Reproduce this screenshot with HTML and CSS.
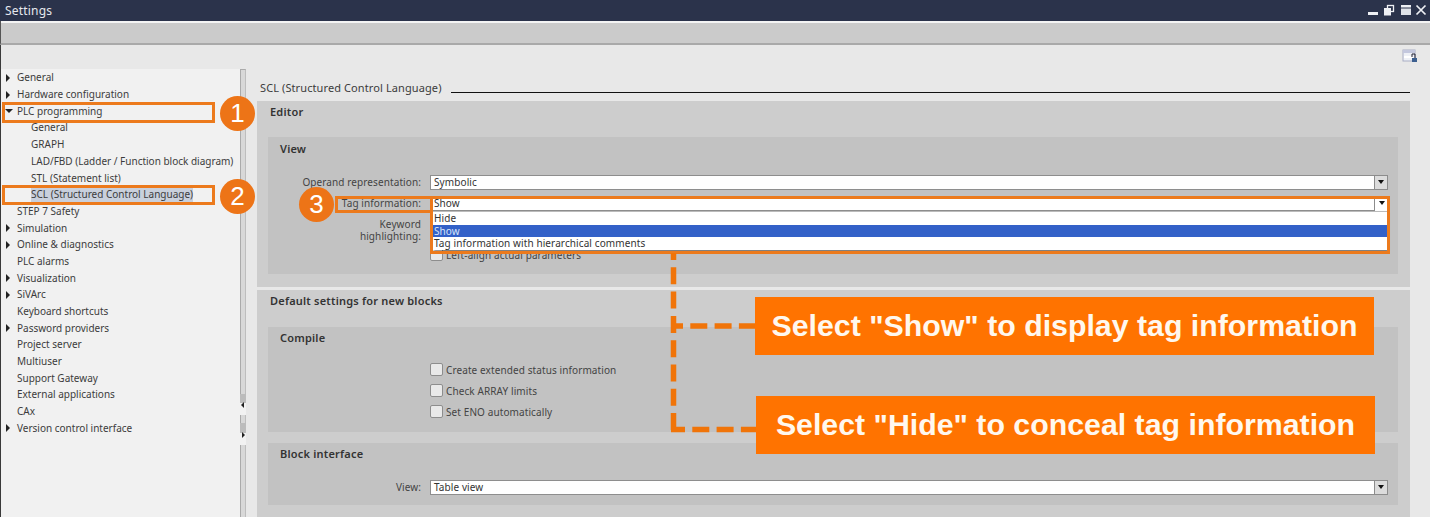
FILE: index.html
```html
<!DOCTYPE html>
<html lang="en">
<head>
<meta charset="utf-8">
<title>Settings</title>
<link rel="stylesheet" href="styles.css">
</head>
<body>
<div class="app">
  <header class="titlebar">
    <span class="title">Settings</span>
    <div class="winbtns">
      <svg width="60" height="14" viewBox="0 0 60 14">
        <rect x="1" y="8" width="10" height="3" fill="#eef0f4"/>
        <rect x="20.500" y="1.500" width="6" height="6" fill="none" stroke="#eef0f4" stroke-width="1.300"/>
        <rect x="17" y="4" width="7" height="7.500" fill="#eef0f4"/>
        <rect x="34" y="1" width="10" height="2.500" fill="#eef0f4"/>
        <rect x="34" y="4.500" width="10" height="6.500" fill="#dfe2e8"/>
        <path d="M49.500 1.500 L58.500 10.500 M58.500 1.500 L49.500 10.500" stroke="#eef0f4" stroke-width="1.700" fill="none"/>
      </svg>
    </div>
  </header>
  <div class="toolbar"></div>
  <div class="body">
    <nav class="side">
      <div class="tree">
        <div class="row"><i class="arr"></i>General</div>
        <div class="row"><i class="arr"></i>Hardware configuration</div>
        <div class="row"><i class="arr open"></i>PLC programming</div>
        <div class="row sub">General</div>
        <div class="row sub">GRAPH</div>
        <div class="row sub">LAD/FBD (Ladder / Function block diagram)</div>
        <div class="row sub">STL (Statement list)</div>
        <div class="row sub"><span class="sel">SCL (Structured Control Language)</span></div>
        <div class="row">STEP 7 Safety</div>
        <div class="row"><i class="arr"></i>Simulation</div>
        <div class="row"><i class="arr"></i>Online &amp; diagnostics</div>
        <div class="row">PLC alarms</div>
        <div class="row"><i class="arr"></i>Visualization</div>
        <div class="row"><i class="arr"></i>SiVArc</div>
        <div class="row">Keyboard shortcuts</div>
        <div class="row"><i class="arr"></i>Password providers</div>
        <div class="row">Project server</div>
        <div class="row">Multiuser</div>
        <div class="row">Support Gateway</div>
        <div class="row">External applications</div>
        <div class="row">CAx</div>
        <div class="row"><i class="arr"></i>Version control interface</div>
      </div>
    </nav>
    <div class="splitter">
      <div class="thumb"></div>
      <div class="split-btns">
        <div class="split-btn"><i class="tri-l"></i></div>
        <div class="split-btn second"><i class="tri-r"></i></div>
      </div>
    </div>
    <main class="main">
      <div class="top-icon">
        <svg width="16" height="14" viewBox="0 0 16 14">
          <rect x="1" y="1" width="12" height="11" fill="#eef0f6" stroke="#a9aec4"/>
          <rect x="1" y="1" width="12" height="3" fill="#c4c8de"/>
          <rect x="2" y="7" width="9" height="2" fill="#fff"/>
          <rect x="10" y="9" width="5" height="4" fill="#3c5f8f"/>
          <path d="M10 8V5h3v4" fill="none" stroke="#223" stroke-width="1"/>
        </svg>
      </div>
      <div class="heading"><span>SCL (Structured Control Language)</span><div class="rule"></div></div>
      <section class="panel editor">
        <h2>Editor</h2>
        <div class="group view">
          <h3>View</h3>
          <div class="field first"><label>Operand representation:</label><div class="combo"><span>Symbolic</span><b class="btn"><i></i></b></div></div>
          <div class="field tag"><label>Tag information:</label><div class="combo flat"><span>Show</span><b class="btn"><i></i></b></div></div>
          <div class="field kw"><label>Keyword<br>highlighting:</label></div>
          <div class="check align"><i class="box"></i>Left-align actual parameters</div>
        </div>
      </section>
      <section class="panel defaults">
        <h2>Default settings for new blocks</h2>
        <div class="group compile">
          <h3>Compile</h3>
          <div class="checks">
            <div class="check"><i class="box"></i>Create extended status information</div>
            <div class="check"><i class="box"></i>Check ARRAY limits</div>
            <div class="check"><i class="box"></i>Set ENO automatically</div>
          </div>
        </div>
        <div class="group block">
          <h3>Block interface</h3>
          <div class="field"><label>View:</label><div class="combo"><span>Table view</span><b class="btn"><i></i></b></div></div>
        </div>
      </section>
    </main>
  </div>

  <div class="popup">
    <div>Hide</div>
    <div class="hl">Show</div>
    <div>Tag information with hierarchical comments</div>
  </div>

  <div class="mark m1"></div>
  <div class="mark m2"></div>
  <div class="mark m3a"></div>
  <div class="mark m3b"></div>
  <div class="num n1">1</div>
  <div class="num n2">2</div>
  <div class="num n3">3</div>

  <svg class="connector" width="90" height="190" viewBox="0 0 90 190">
    <path class="dash v" d="M3.500 2V179"/>
    <path class="dash h1" d="M1 75H86"/>
    <path class="dash h2" d="M1 178.500H86"/>
  </svg>
  <div class="callout c1">Select "Show" to display tag information</div>
  <div class="callout c2">Select "Hide" to conceal tag information</div>
</div>
</body>
</html>
```
FILE: styles.css
```css
* { box-sizing: border-box; }
html, body { margin: 0; padding: 0; }
body { width: 1430px; height: 517px; overflow: hidden; font-family: "Noto Sans", "Open Sans", sans-serif; font-size: 10px; color: #333; background: #e8e8e8; }
.app { position: relative; width: 1430px; height: 517px; overflow: hidden; display: flex; flex-direction: column; }
.titlebar { height: 21px; flex: none; background: #2b334b; color: #e6e8ee; display: flex; align-items: center; justify-content: space-between; padding: 0 3px 0 5px; }
.title { font-size: 12px; letter-spacing: .2px; }
.winbtns { display: flex; align-items: center; height: 14px; }
.toolbar { height: 24px; flex: none; background: #cbcbcb; border-bottom: 2px solid #a9a9a9; border-left: 1px solid #555; box-shadow: inset 0 2px 0 #f4f4f4; }
.body { flex: 1; display: flex; min-height: 0; border-left: 1px solid #3a3a3a; }
.side { width: 239px; flex: none; margin-top: 24px; background: #f1f1f1; }
.tree { font-size: 10px; color: #3c3c3c; padding-top: .4px; }
.row { height: 16.7px; line-height: 16.7px; padding-left: 16px; position: relative; white-space: nowrap; }
.row.sub { padding-left: 30px; }
.sel { background: #c9d0dc; padding: 1px 0; }
.arr { position: absolute; left: 5px; top: 4.500px; width: 0; height: 0; border-left: 4px solid #222; border-top: 4px solid transparent; border-bottom: 4px solid transparent; }
.arr.open { left: 4px; top: 6.500px; border-left: 4px solid transparent; border-right: 4px solid transparent; border-top: 4px solid #222; border-bottom: 0; }
.splitter { width: 17px; flex: none; background: #e8e8e8; position: relative; }
.thumb { position: absolute; left: 0; top: 24px; bottom: 0; width: 6px; background: #d8d8d8; border-left: 1px solid #aaa; border-right: 1px solid #bdbdbd; border-top: 1px solid #aaa; }
.split-btns { position: absolute; left: 0; top: 349px; width: 6px; }
.split-btn { height: 21px; background: linear-gradient(#bcbcbc 45%, #f2f2f2 45%); position: relative; }
.split-btn.second { margin-top: 8px; height: 22px; }
.tri-l, .tri-r { position: absolute; top: 8px; left: 1px; width: 0; height: 0; border-top: 3px solid transparent; border-bottom: 3px solid transparent; }
.tri-l { border-right: 3px solid #222; }
.tri-r { border-left: 3px solid #222; left: 2px; top: 9px; }
.main { flex: 1; min-width: 0; padding-right: 20px; display: flex; flex-direction: column; background: #e8e8e8; }
.top-icon { height: 0; align-self: flex-end; margin: 4px -8px 0 0; }
.heading { display: flex; align-items: flex-end; gap: 9px; margin: 27px 0 0 3px; height: 20px; font-size: 11px; letter-spacing: .1px; color: #3c3c3c; }
.heading span { line-height: 16px; }
.rule { flex: 1; height: 1px; background: #111; margin: 0 0 3px 0; }
.panel { background: #cdcdcd; padding: 0 12px 0 11px; }
.editor { height: 186px; margin-top: 5px; flex: none; }
.defaults { height: 227px; margin-top: 3px; flex: none; }
h2 { margin: 0; font-size: 11px; font-weight: 600; letter-spacing: .2px; color: #333; height: 36px; padding: 4px 2px 0; line-height: 14px; }
.defaults h2 { height: 37px; padding-top: 4px; }
h3 { margin: 0; font-size: 11px; font-weight: 600; letter-spacing: .2px; color: #333; line-height: 14px; }
.group { background: #c2c2c2; padding: 5px 12px; }
.view { height: 137px; position: relative; }
.compile { height: 105px; padding-top: 4px; }
.block { height: 62px; margin-top: 11px; padding-top: 4px; }
.field { display: flex; align-items: center; height: 16px; }
.field label { width: 150px; flex: none; text-align: right; padding-right: 9px; line-height: 12px; letter-spacing: .1px; color: #444; }
.first { margin-top: 18px; }
.tag { margin-top: 5px; }
.kw { margin-top: 7px; height: 24px; }
.block .field { margin-top: 18px; }
.combo { width: 958px; height: 15px; background: #fff; border: 1px solid #8e8e8e; border-right: 0; display: flex; align-items: center; justify-content: space-between; padding-left: 3px; letter-spacing: .1px; color: #333; flex: none; }
.btn { width: 14px; height: 15px; flex: none; background: #dcdcdc; border: 1px solid #8c8c8c; display: flex; align-items: center; justify-content: center; }
.btn i { width: 0; height: 0; border-left: 3.500px solid transparent; border-right: 3.500px solid transparent; border-top: 4px solid #111; }
.flat .btn { background: #fff; border-width: 0 0 0 1px; }
.check { display: flex; align-items: center; height: 21px; letter-spacing: .1px; color: #444; }
.box { width: 13px; height: 13px; background: #e9e9e9; border: 1px solid #8d8d8d; border-radius: 2px; margin-right: 3px; flex: none; }
.align { position: absolute; left: 162px; top: 107px; }
.checks { margin: 14px 0 0 150px; }
.popup { position: absolute; left: 433px; top: 212px; width: 954px; height: 38px; background: #fff; color: #333; letter-spacing: .1px; font-size: 10px; box-shadow: 1px 1px 2px rgba(0,0,0,.5); }
.popup div { height: 12.500px; line-height: 12.500px; padding-left: 1px; }
.popup .hl { background: #3361c8; color: #d8e4f8; }
.mark { position: absolute; border: 3px solid #ec7a1c; }
.m1 { left: 2px; top: 102px; width: 213px; height: 21px; }
.m2 { left: 2px; top: 185px; width: 213px; height: 20px; }
.m3a { left: 335px; top: 196px; width: 96px; height: 17px; border-right: 0; }
.m3b { left: 430px; top: 196px; width: 960px; height: 58px; }
.num { position: absolute; width: 35px; height: 35px; border-radius: 50%; background: #ed7417; color: #fff; font-family: "Liberation Sans", Arial, sans-serif; font-size: 26px; line-height: 35px; text-align: center; }
.n1 { left: 220px; top: 96px; }
.n2 { left: 220px; top: 179px; }
.n3 { left: 299px; top: 187px; }
.connector { position: absolute; left: 670px; top: 251px; }
.dash { fill: none; stroke: #f07409; stroke-width: 5.500px; stroke-dasharray: 17 7.300; }
.dash.v { stroke-dashoffset: 10; }
.dash.h1 { stroke-dashoffset: 5; }
.dash.h2 { stroke-dashoffset: 3; }
.callout { position: absolute; background: #ff7300; color: #fff8ee; font-family: "Liberation Sans", Arial, sans-serif; font-weight: 700; font-size: 30.300px; display: flex; align-items: center; justify-content: center; white-space: nowrap; }
.c1 { left: 755px; top: 297px; width: 619px; height: 58px; }
.c2 { left: 756px; top: 396px; width: 619px; height: 58px; }
```
